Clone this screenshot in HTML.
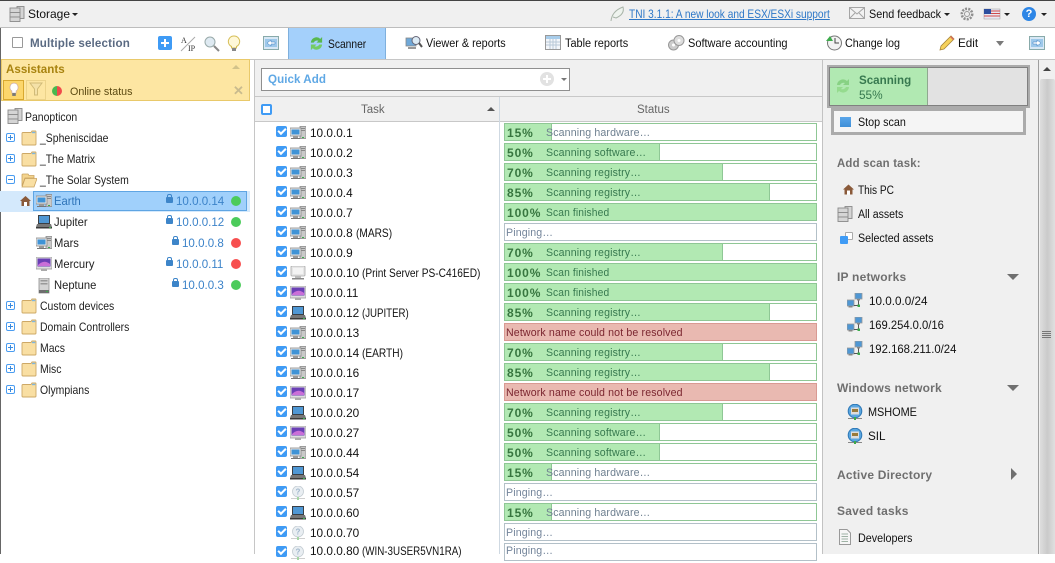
<!DOCTYPE html>
<html><head><meta charset="utf-8"><style>
html,body{margin:0;padding:0}
body{width:1055px;height:554px;overflow:hidden;position:relative;background:#fff;font:12px/14px "Liberation Sans",sans-serif;color:#111}
.a,.t,svg.i{position:absolute}
.t{white-space:nowrap;transform-origin:0 0}
svg.i{overflow:visible}
.h{font-weight:bold;color:#6f6f6f;font-size:12px;letter-spacing:.2px}
#rows{position:absolute;left:255px;top:123px;width:565px}
.r{position:relative;height:20px}
.c{position:absolute;left:21px;top:3px;width:11px;height:11px;background:#3f9bf5;border-radius:2px}
.c:after{content:"";position:absolute;left:2px;top:2px;width:6px;height:3px;border-left:2px solid #fff;border-bottom:2px solid #fff;transform:rotate(-45deg)}
.r svg{position:absolute;left:35px;top:3px;width:16px;height:16px}
.n{position:absolute;left:55px;top:3px;white-space:nowrap;font-size:11.8px;line-height:14px}
.n u{display:inline-block;text-decoration:none;transform:scaleX(.86);transform-origin:0 0}
.b{position:absolute;left:249px;top:0;width:311px;height:16px;border:1px solid #b3c0c8;background:#fff;overflow:hidden}
.f{position:absolute;left:0;top:0;height:16px;background:#b2e9b3;border-right:1px solid #8fc795}
.b.g{border-color:#8fc795}
.b.e{background:#e9b9b1;border-color:#d99a93}
.b b{position:absolute;left:2px;top:2px;color:#37763f;font-size:12px;letter-spacing:.9px;line-height:14px}
.b span{position:absolute;left:41px;top:2px;white-space:nowrap;color:#37794f;font-size:11.4px;line-height:14px;letter-spacing:.15px;transform:scaleX(.93);transform-origin:0 0}
.b.w span{color:#6d7f8f}
.b.p span{left:1px;color:#73849a}
.b.e span{left:1px;color:#7b2630}
.b span.fin{transform:scaleX(.9)}
.tr{position:absolute;left:0;width:250px;height:21px}
.pl{position:absolute;left:6px;top:5px;width:7px;height:7px;border:1px solid #4a9cf0;border-radius:2px;background:#fff}
.pl:before{content:"";position:absolute;left:1px;top:3px;width:5px;height:1px;background:#3a8be0}
.pl.o:after{content:"";position:absolute;left:3px;top:1px;width:1px;height:5px;background:#3a8be0}
.lb{position:absolute;white-space:nowrap;top:3px;font-size:11.8px;line-height:14px;color:#222;transform:scaleX(.885);transform-origin:0 0}
.lb.k{transform:scaleX(.95)}
.ip{position:absolute;white-space:nowrap;top:3px;color:#3c83c9;font-size:11.8px;line-height:14px;transform:scaleX(.98);transform-origin:0 0}
.dot{position:absolute;left:231px;top:5px;width:10px;height:10px;border-radius:50%}
.lk{position:absolute;top:6px;width:7px;height:6px;background:#3d85c9;border-radius:1px}
.lk:before{content:"";position:absolute;left:1px;top:-3px;width:3px;height:3px;border:1px solid #3d85c9;border-bottom:0;border-radius:2px 2px 0 0}
</style></head><body>
<svg width="0" height="0" style="position:absolute"><defs>
<symbol id="d" viewBox="0 0 16 16"><rect x="10" y="0.500" width="6" height="12" fill="#c9c9c9" stroke="#8a8a8a" stroke-width=".8"/><rect x="11" y="2" width="4" height="1" fill="#888"/><rect x="11" y="4" width="4" height="1" fill="#888"/><rect x="0" y="2" width="11" height="8" fill="#e5e5e5" stroke="#8a8a8a" stroke-width=".8"/><rect x="1.500" y="3.500" width="8" height="5" fill="#3f93d6"/><rect x="3" y="10" width="5" height="2" fill="#999"/><rect x="1" y="12" width="9" height="1" fill="#777"/><rect x="12" y="11" width="2" height="1" fill="#3dab4b"/></symbol>
<symbol id="l" viewBox="0 0 16 16"><rect x="2" y="0" width="12" height="9" fill="#3a3f45"/><rect x="3" y="1" width="10" height="7" fill="#4f97d4"/><path d="M1 9H15L16 12H0Z" fill="#777"/><rect x="0" y="12" width="16" height="1.500" fill="#3b3b3b"/><rect x="13" y="12" width="2" height="1" fill="#3dab4b"/></symbol>
<symbol id="m" viewBox="0 0 16 16"><rect x="0" y="0" width="16" height="12" fill="#dedede" stroke="#999" stroke-width=".8"/><rect x="1.500" y="1.500" width="13" height="8" fill="#6a3fb5"/><path d="M2 8Q8 2 14 7V9H2Z" fill="#c96fd8"/><rect x="5" y="12" width="6" height="2" fill="#aaa"/></symbol>
<symbol id="s" viewBox="0 0 16 16"><rect x="3" y="0" width="10" height="15" fill="#d4d4d4" stroke="#8f8f8f" stroke-width=".8"/><rect x="4.500" y="2" width="7" height="1.500" fill="#999"/><rect x="4.500" y="5" width="7" height="1.500" fill="#999"/><rect x="3" y="12" width="10" height="3" fill="#6e6e6e"/><rect x="10" y="13" width="2" height="1" fill="#3dab4b"/></symbol>
<symbol id="p" viewBox="0 0 16 16"><rect x="1" y="0" width="14" height="10" rx="1" fill="#e6e6e6" stroke="#aaa" stroke-width=".8"/><rect x="3" y="2" width="10" height="6" fill="#f4f4f4"/><rect x="5" y="10" width="6" height="2" fill="#bbb"/><rect x="2" y="12" width="12" height="1.500" fill="#8a8a8a"/></symbol>
<symbol id="u" viewBox="0 0 16 16"><circle cx="8" cy="5.500" r="5.500" fill="#e9eef2" stroke="#c3ccd2" stroke-width=".8"/><text x="8" y="8.500" font-size="8" font-weight="bold" text-anchor="middle" fill="#9fb6cc" font-family="Liberation Sans">?</text><rect x="1" y="12" width="14" height="1" fill="#cfcfcf"/><rect x="7" y="11" width="2" height="3" fill="#a5d6a5"/></symbol>
<symbol id="fo" viewBox="0 0 16 16"><path d="M1 3.500Q1 2.500 2 2.500H10L11 1H14.500Q15 1 15 2V14Q15 15 14 15H2Q1 15 1 14Z" fill="#f9dfa3" stroke="#cda866" stroke-width=".9"/><rect x="11" y="1.800" width="3.300" height="1.400" fill="#7fb6df"/></symbol>
<symbol id="fop" viewBox="0 0 16 16"><path d="M1 3Q1 2 2 2H7L8 3.500H13V6H4L1 14Z" fill="#f4d48e" stroke="#c9a25f" stroke-width=".8"/><path d="M4 6.500H16L13 15H1Z" fill="#f9dfa3" stroke="#c9a25f" stroke-width=".8"/></symbol>
<symbol id="st" viewBox="0 0 16 16"><g fill="#d5d5d5" stroke="#8a8a8a" stroke-width=".9"><rect x="8" y="0.500" width="7" height="12"/><rect x="1" y="2" width="10" height="4.500"/><rect x="1" y="6.500" width="10" height="4.500"/><rect x="1" y="11" width="10" height="4.500"/></g></symbol>
<symbol id="scan" viewBox="0 0 16 16"><path d="M2 7A6 6 0 0 1 12 3L14 1V7H8L10 5A4 4 0 0 0 5 7Z" fill="#58b84e"/><path d="M14 9A6 6 0 0 1 4 13L2 15V9H8L6 11A4 4 0 0 0 11 9Z" fill="#74cc64"/></symbol>
<symbol id="net" viewBox="0 0 16 16"><rect x="8" y="0" width="7" height="6" fill="#4f97d4" stroke="#999" stroke-width=".8"/><rect x="10" y="6" width="3" height="1.500" fill="#888"/><rect x="0" y="7" width="7" height="6" fill="#4f97d4" stroke="#999" stroke-width=".8"/><rect x="1.500" y="13" width="4" height="1.500" fill="#888"/><path d="M11.500 7.500V12.500H7" fill="none" stroke="#555"/><rect x="10.500" y="11.500" width="2.500" height="2.500" fill="#3dab4b"/></symbol>
<symbol id="win" viewBox="0 0 16 16"><circle cx="8" cy="7" r="6.800" fill="#5aa6e0" stroke="#2b76b5"/><rect x="4" y="3.500" width="8" height="7" fill="#ddd"/><rect x="5" y="5" width="6" height="3" fill="#9a7a3a"/><rect x="1" y="14" width="14" height="1" fill="#888"/><rect x="7" y="13" width="2" height="3" fill="#3dab4b"/></symbol>
</defs></svg>

<!-- top bar -->
<div class="a" style="left:0;top:0;width:1055px;height:27px;background:#f0f0f0;border-top:1px solid #444;box-sizing:border-box"></div>
<div class="a" style="left:0;top:27px;width:1055px;height:1px;background:#bdbdbd"></div>
<svg class="i" style="left:9px;top:6px" width="16" height="16"><use href="#st"/></svg>
<div class="t" style="left:28px;top:7px">Storage</div>
<div class="a" style="left:72px;top:13px;border:3px solid transparent;border-top:3px solid #222"></div>
<svg class="i" style="left:610px;top:6px" width="16" height="16" viewBox="0 0 16 16"><path d="M1 15Q2 5 13 1Q15 8 6 12L3 11" fill="#eef3ee" stroke="#a8b4a8"/></svg>
<div class="t" style="left:629px;top:7px;color:#2d77c7;text-decoration:underline;font-size:11.8px;transform:scaleX(.86)">TNI 3.1.1: A new look and ESX/ESXi support</div>
<svg class="i" style="left:849px;top:7px" width="16" height="13" viewBox="0 0 16 13"><rect x=".5" y=".5" width="15" height="11" fill="#f2f2f2" stroke="#a5a5a5"/><path d="M1 1L8 7L15 1M1 11L6 6M15 11L10 6" fill="none" stroke="#a5a5a5"/></svg>
<div class="t" style="left:869px;top:7px;transform:scaleX(.9)">Send feedback</div>
<div class="a" style="left:944px;top:13px;border:3px solid transparent;border-top:3px solid #222"></div>
<svg class="i" style="left:960px;top:7px" width="14" height="14" viewBox="0 0 14 14"><circle cx="7" cy="7" r="5.200" fill="none" stroke="#8f8f8f" stroke-width="2.600" stroke-dasharray="2 1.200"/><circle cx="7" cy="7" r="2.500" fill="#eee" stroke="#999"/></svg>
<svg class="i" style="left:984px;top:9px" width="16" height="10" viewBox="0 0 16 10"><rect width="16" height="10" fill="#e8e8f2" stroke="#999" stroke-width=".5"/><path d="M0 2H16M0 4.500H16M0 7H16" stroke="#cf4a4a" stroke-width="1"/><rect width="7" height="5" fill="#2c4e9e"/></svg>
<div class="a" style="left:1004px;top:13px;border:3px solid transparent;border-top:3px solid #222"></div>
<div class="a" style="left:1022px;top:7px;width:14px;height:14px;border-radius:50%;background:#2d86e6;color:#fff;font:bold 11px/14px 'Liberation Sans';text-align:center">?</div>
<div class="a" style="left:1041px;top:13px;border:3px solid transparent;border-top:3px solid #222"></div>

<!-- toolbar -->
<div class="a" style="left:0;top:59px;width:1055px;height:1px;background:#c6c6c6"></div>
<div class="a" style="left:12px;top:37px;width:9px;height:9px;border:1px solid #999;background:#fff;border-radius:1px"></div>
<div class="t" style="left:30px;top:37px;font-weight:bold;color:#5a6a82;font-size:11.6px;letter-spacing:.15px">Multiple selection</div>
<div class="a" style="left:158px;top:36px;width:14px;height:14px;background:#3f9bf5;border-radius:2px"></div>
<div class="a" style="left:161px;top:42px;width:8px;height:2px;background:#fff"></div>
<div class="a" style="left:164px;top:39px;width:2px;height:8px;background:#fff"></div>
<svg class="i" style="left:180px;top:35px" width="18" height="17" viewBox="0 0 18 17"><path d="M1 16L15 2" stroke="#aaa"/><text x="1" y="8" font-family="Liberation Serif" font-size="8" fill="#333">A</text><text x="8" y="16" font-family="Liberation Serif" font-size="8" fill="#333">IP</text></svg>
<svg class="i" style="left:204px;top:36px" width="16" height="16" viewBox="0 0 16 16"><circle cx="6" cy="6" r="5" fill="#dfeaf2" stroke="#9aa"/><path d="M10 10L15 15" stroke="#888" stroke-width="2"/></svg>
<svg class="i" style="left:227px;top:35px" width="14" height="17" viewBox="0 0 14 17"><path d="M7 1A5.500 5.500 0 0 0 4.500 11.500V13H9.500V11.500A5.500 5.500 0 0 0 7 1Z" fill="#fff8d8" stroke="#d5bd55"/><rect x="5" y="13" width="4" height="3" fill="#888"/></svg>
<svg class="i" style="left:263px;top:36px" width="16" height="14" viewBox="0 0 16 14"><rect x=".5" y=".5" width="15" height="13" fill="#d8e8f5" stroke="#8aa"/><rect x="2" y="3" width="12" height="8" fill="#9dc8ea"/><path d="M4 7L8 4V6H12V8H8V10Z" fill="#fff" stroke="#3a7cc0" stroke-width=".5"/></svg>
<div class="a" style="left:288px;top:28px;width:96px;height:31px;background:#a4d0fb;border:1px solid #7fb0dd;border-top:0;border-bottom:0"></div>
<svg class="i" style="left:309px;top:36px" width="15" height="15"><use href="#scan"/></svg>
<div class="t" style="left:328px;top:37px;font-size:11.8px;transform:scaleX(.87)">Scanner</div>
<svg class="i" style="left:406px;top:35px" width="16" height="16" viewBox="0 0 16 16"><rect x="0" y="3" width="10" height="8" fill="#6fa8d8" stroke="#888" stroke-width=".8"/><circle cx="10" cy="5.500" r="4" fill="#dcebf5" stroke="#667"/><path d="M13 8L16 12" stroke="#555" stroke-width="2"/><rect x="2" y="12" width="8" height="2" fill="#999"/></svg>
<div class="t" style="left:426px;top:37px;font-size:11.5px;transform:scaleX(.94)">Viewer &amp; reports</div>
<svg class="i" style="left:545px;top:35px" width="16" height="15" viewBox="0 0 16 15"><rect x=".5" y=".5" width="15" height="14" fill="#f3f6fa" stroke="#999"/><rect x="1" y="1" width="14" height="3" fill="#a8cdeb"/><path d="M1 7H15M1 10H15M5 4V14M8 4V14M11 4V14" stroke="#b8c8d8"/></svg>
<div class="t" style="left:565px;top:37px;font-size:11.5px;transform:scaleX(.95)">Table reports</div>
<svg class="i" style="left:668px;top:35px" width="16" height="16" viewBox="0 0 16 16"><circle cx="5.500" cy="10" r="5" fill="#ccc" stroke="#999"/><circle cx="5.500" cy="10" r="1.500" fill="#fff"/><circle cx="11" cy="5.500" r="5" fill="#ddd" stroke="#999"/><circle cx="11" cy="5.500" r="1.500" fill="#fff"/></svg>
<div class="t" style="left:688px;top:37px;font-size:11.7px;transform:scaleX(.94)">Software accounting</div>
<svg class="i" style="left:826px;top:35px" width="16" height="16" viewBox="0 0 16 16"><circle cx="8.500" cy="8" r="7" fill="#f2f2f2" stroke="#777"/><path d="M9 3V8H13" fill="none" stroke="#444"/><path d="M0 6L4 1L7 6Z" fill="#3dab4b"/></svg>
<div class="t" style="left:845px;top:37px;font-size:11.7px;transform:scaleX(.92)">Change log</div>
<svg class="i" style="left:939px;top:35px" width="16" height="16" viewBox="0 0 16 16"><path d="M1 15L2 11L12 1L15 4L5 14Z" fill="#f6d25c" stroke="#a8853a" stroke-width=".8"/><path d="M12 1L15 4L14 5L11 2Z" fill="#d86a5a"/></svg>
<div class="t" style="left:958px;top:37px;font-size:11.7px">Edit</div>
<div class="a" style="left:996px;top:41px;border:4px solid transparent;border-top:5px solid #7a7a7a;border-left-width:4px"></div>
<svg class="i" style="left:1029px;top:36px" width="16" height="14" viewBox="0 0 16 14"><rect x=".5" y=".5" width="15" height="13" fill="#d8e8f5" stroke="#8aa"/><rect x="2" y="3" width="12" height="8" fill="#9dc8ea"/><path d="M12 7L8 4V6H4V8H8V10Z" fill="#fff" stroke="#3a7cc0" stroke-width=".5"/></svg>

<!-- left -->
<div class="a" style="left:0;top:28px;width:1px;height:526px;background:#666"></div>
<div class="a" style="left:1px;top:59px;width:249px;height:42px;background:#fde6a2;border:1px solid #e9c96a;box-sizing:border-box"></div>
<div class="t" style="left:6px;top:63px;font-weight:bold;color:#a8830f;font-size:11.6px;letter-spacing:0">Assistants</div>
<div class="a" style="left:232px;top:65px;border:4px solid transparent;border-bottom:4px solid #d2c28a;border-top:0"></div>
<div class="a" style="left:3px;top:80px;width:19px;height:18px;background:#fcd66b;border:1px solid #d8a830"></div>
<svg class="i" style="left:9px;top:82px" width="10" height="15" viewBox="0 0 14 20"><path d="M7 1A6 6 0 0 0 4 12V15H10V12A6 6 0 0 0 7 1Z" fill="#fff" stroke="#caa"/><rect x="4.500" y="15" width="5" height="4" fill="#777"/></svg>
<div class="a" style="left:26px;top:80px;width:18px;height:18px;border:1px solid #ecd38a"></div>
<svg class="i" style="left:29px;top:82px" width="14" height="15" viewBox="0 0 14 15"><path d="M1 1H13L8.500 7V13H5.500V7Z" fill="#f4e1a8" stroke="#d1bb78"/></svg>
<div class="a" style="left:52px;top:86px;width:5px;height:10px;background:#48b94f;border-radius:5px 0 0 5px"></div>
<div class="a" style="left:57px;top:86px;width:5px;height:10px;background:#f04b4b;border-radius:0 5px 5px 0"></div>
<div class="t" style="left:70px;top:85px;color:#5c4a12;font-size:11.4px;transform:scaleX(.94)">Online status</div>
<div class="t" style="left:233px;top:84px;color:#c9bb8e;font-weight:bold;font-size:13px">✕</div>

<svg class="i" style="left:7px;top:108px" width="16" height="16"><use href="#st"/></svg>
<div class="t" style="left:25px;top:110px;font-size:11.8px;color:#222;transform:scaleX(.885)">Panopticon</div>

<div class="tr" style="top:128px"><i class="pl o"></i><svg class="i" style="left:21px;top:2px" width="16" height="16"><use href="#fo"/></svg><span class="lb" style="left:40px">_Spheniscidae</span></div>
<div class="tr" style="top:149px"><i class="pl o"></i><svg class="i" style="left:21px;top:2px" width="16" height="16"><use href="#fo"/></svg><span class="lb" style="left:40px">_The Matrix</span></div>
<div class="tr" style="top:170px"><i class="pl"></i><svg class="i" style="left:21px;top:2px" width="16" height="16"><use href="#fop"/></svg><span class="lb" style="left:40px">_The Solar System</span></div>
<div class="tr" style="top:191px;background:#d4e9fc"><div class="a" style="left:33px;top:0;width:212px;height:18px;background:#a0d0fb;border:1px solid #5fa5e3"></div>
<svg class="i" style="left:20px;top:5px" width="11" height="10" viewBox="0 0 11 10"><path d="M5.500 0L11 5H9.500V10H1.500V5H0Z" fill="#8a5a3a"/><rect x="4" y="6" width="3" height="4" fill="#fff"/></svg>
<svg class="i" style="left:36px;top:3px" width="16" height="16"><use href="#d"/></svg><span class="lb k" style="left:54px;color:#2d73b8">Earth</span><i class="lk" style="left:166px"></i><span class="ip" style="left:176px">10.0.0.14</span><i class="dot" style="background:#4ccb5b"></i></div>
<div class="tr" style="top:212px"><svg class="i" style="left:36px;top:3px" width="16" height="16"><use href="#l"/></svg><span class="lb k" style="left:54px">Jupiter</span><i class="lk" style="left:166px"></i><span class="ip" style="left:176px">10.0.0.12</span><i class="dot" style="background:#4ccb5b"></i></div>
<div class="tr" style="top:233px"><svg class="i" style="left:36px;top:3px" width="16" height="16"><use href="#d"/></svg><span class="lb k" style="left:54px">Mars</span><i class="lk" style="left:172px"></i><span class="ip" style="left:182px">10.0.0.8</span><i class="dot" style="background:#f74f4f"></i></div>
<div class="tr" style="top:254px"><svg class="i" style="left:36px;top:3px" width="16" height="16"><use href="#m"/></svg><span class="lb k" style="left:54px">Mercury</span><i class="lk" style="left:166px"></i><span class="ip" style="left:176px">10.0.0.11</span><i class="dot" style="background:#f74f4f"></i></div>
<div class="tr" style="top:275px"><svg class="i" style="left:36px;top:3px" width="16" height="16"><use href="#s"/></svg><span class="lb k" style="left:54px">Neptune</span><i class="lk" style="left:172px"></i><span class="ip" style="left:182px">10.0.0.3</span><i class="dot" style="background:#4ccb5b"></i></div>
<div class="tr" style="top:296px"><i class="pl o"></i><svg class="i" style="left:21px;top:2px" width="16" height="16"><use href="#fo"/></svg><span class="lb" style="left:40px">Custom devices</span></div>
<div class="tr" style="top:317px"><i class="pl o"></i><svg class="i" style="left:21px;top:2px" width="16" height="16"><use href="#fo"/></svg><span class="lb" style="left:40px">Domain Controllers</span></div>
<div class="tr" style="top:338px"><i class="pl o"></i><svg class="i" style="left:21px;top:2px" width="16" height="16"><use href="#fo"/></svg><span class="lb" style="left:40px">Macs</span></div>
<div class="tr" style="top:359px"><i class="pl o"></i><svg class="i" style="left:21px;top:2px" width="16" height="16"><use href="#fo"/></svg><span class="lb" style="left:40px">Misc</span></div>
<div class="tr" style="top:380px"><i class="pl o"></i><svg class="i" style="left:21px;top:2px" width="16" height="16"><use href="#fo"/></svg><span class="lb" style="left:40px">Olympians</span></div>

<!-- center -->
<div class="a" style="left:254px;top:60px;width:1px;height:494px;background:#c6c6c6"></div>
<div class="a" style="left:255px;top:60px;width:567px;height:61px;background:#f0f0f0"></div>
<div class="a" style="left:255px;top:96px;width:567px;height:1px;background:#c8c8c8"></div>
<div class="a" style="left:255px;top:121px;width:567px;height:1px;background:#c8c8c8"></div>
<div class="a" style="left:499px;top:97px;width:1px;height:457px;background:#cfd9e2"></div>
<div class="a" style="left:261px;top:68px;width:307px;height:21px;background:#fff;border:1px solid #8f8f8f"></div>
<div class="t" style="left:268px;top:73px;font-weight:bold;color:#5fa8e5;font-size:11.6px;letter-spacing:.05px">Quick Add</div>
<div class="a" style="left:540px;top:72px;width:14px;height:14px;border-radius:50%;background:#e2e2e2"></div>
<div class="a" style="left:543px;top:78px;width:8px;height:2px;background:#fff"></div>
<div class="a" style="left:546px;top:75px;width:2px;height:8px;background:#fff"></div>
<div class="a" style="left:561px;top:78px;border:3px solid transparent;border-top:3px solid #777"></div>
<div class="a" style="left:261px;top:104px;width:7px;height:7px;border:2px solid #3f9bf5;border-radius:2px;background:#fff"></div>
<div class="t" style="left:361px;top:103px;color:#666;font-size:11.5px">Task</div>
<div class="a" style="left:487px;top:107px;border:4px solid transparent;border-bottom:4px solid #555;border-top:0"></div>
<div class="t" style="left:637px;top:103px;color:#666;font-size:11.5px">Status</div>

<div id="rows">
<div class="r"><i class="c"></i><svg><use href="#d"/></svg><span class="n">10.0.0.1</span><div class="b g w"><div class="f" style="width:46px"></div><b>15%</b><span>Scanning hardware…</span></div></div>
<div class="r"><i class="c"></i><svg><use href="#d"/></svg><span class="n">10.0.0.2</span><div class="b g"><div class="f" style="width:154px"></div><b>50%</b><span>Scanning software…</span></div></div>
<div class="r"><i class="c"></i><svg><use href="#d"/></svg><span class="n">10.0.0.3</span><div class="b g"><div class="f" style="width:217px"></div><b>70%</b><span>Scanning registry…</span></div></div>
<div class="r"><i class="c"></i><svg><use href="#d"/></svg><span class="n">10.0.0.4</span><div class="b g"><div class="f" style="width:264px"></div><b>85%</b><span>Scanning registry…</span></div></div>
<div class="r"><i class="c"></i><svg><use href="#d"/></svg><span class="n">10.0.0.7</span><div class="b g"><div class="f" style="width:311px;border:0"></div><b>100%</b><span class="fin">Scan finished</span></div></div>
<div class="r"><i class="c"></i><svg><use href="#d"/></svg><span class="n">10.0.0.8 <u>(MARS)</u></span><div class="b p"><span>Pinging…</span></div></div>
<div class="r"><i class="c"></i><svg><use href="#d"/></svg><span class="n">10.0.0.9</span><div class="b g"><div class="f" style="width:217px"></div><b>70%</b><span>Scanning registry…</span></div></div>
<div class="r"><i class="c"></i><svg><use href="#p"/></svg><span class="n">10.0.0.10 <u>(Print Server PS-C416ED)</u></span><div class="b g"><div class="f" style="width:311px;border:0"></div><b>100%</b><span class="fin">Scan finished</span></div></div>
<div class="r"><i class="c"></i><svg><use href="#m"/></svg><span class="n">10.0.0.11</span><div class="b g"><div class="f" style="width:311px;border:0"></div><b>100%</b><span class="fin">Scan finished</span></div></div>
<div class="r"><i class="c"></i><svg><use href="#l"/></svg><span class="n">10.0.0.12 <u style="transform:scaleX(.82)">(JUPITER)</u></span><div class="b g"><div class="f" style="width:264px"></div><b>85%</b><span>Scanning registry…</span></div></div>
<div class="r"><i class="c"></i><svg><use href="#d"/></svg><span class="n">10.0.0.13</span><div class="b e"><span>Network name could not be resolved</span></div></div>
<div class="r"><i class="c"></i><svg><use href="#d"/></svg><span class="n">10.0.0.14 <u>(EARTH)</u></span><div class="b g"><div class="f" style="width:217px"></div><b>70%</b><span>Scanning registry…</span></div></div>
<div class="r"><i class="c"></i><svg><use href="#d"/></svg><span class="n">10.0.0.16</span><div class="b g"><div class="f" style="width:264px"></div><b>85%</b><span>Scanning registry…</span></div></div>
<div class="r"><i class="c"></i><svg><use href="#m"/></svg><span class="n">10.0.0.17</span><div class="b e"><span>Network name could not be resolved</span></div></div>
<div class="r"><i class="c"></i><svg><use href="#l"/></svg><span class="n">10.0.0.20</span><div class="b g"><div class="f" style="width:217px"></div><b>70%</b><span>Scanning registry…</span></div></div>
<div class="r"><i class="c"></i><svg><use href="#m"/></svg><span class="n">10.0.0.27</span><div class="b g"><div class="f" style="width:154px"></div><b>50%</b><span>Scanning software…</span></div></div>
<div class="r"><i class="c"></i><svg><use href="#d"/></svg><span class="n">10.0.0.44</span><div class="b g"><div class="f" style="width:154px"></div><b>50%</b><span>Scanning software…</span></div></div>
<div class="r"><i class="c"></i><svg><use href="#l"/></svg><span class="n">10.0.0.54</span><div class="b g w"><div class="f" style="width:46px"></div><b>15%</b><span>Scanning hardware…</span></div></div>
<div class="r"><i class="c"></i><svg><use href="#u"/></svg><span class="n">10.0.0.57</span><div class="b p"><span>Pinging…</span></div></div>
<div class="r"><i class="c"></i><svg><use href="#l"/></svg><span class="n">10.0.0.60</span><div class="b g w"><div class="f" style="width:46px"></div><b>15%</b><span>Scanning hardware…</span></div></div>
<div class="r"><i class="c"></i><svg><use href="#u"/></svg><span class="n">10.0.0.70</span><div class="b p"><span>Pinging…</span></div></div>
<div class="r"><i class="c"></i><svg><use href="#u"/></svg><span class="n" style="top:1px">10.0.0.80 <u style="transform:scaleX(.83)">(WIN-3USER5VN1RA)</u></span><div class="b p"><span style="top:0">Pinging…</span></div></div>
</div>

<!-- right -->
<div class="a" style="left:822px;top:60px;width:216px;height:494px;background:#f0f0f0;border-left:1px solid #c2c2c2;box-sizing:border-box"></div>
<div class="a" style="left:1038px;top:60px;width:17px;height:494px;background:#f0f0f0;border-left:1px solid #9e9e9e;box-sizing:border-box"></div>
<div class="a" style="left:1040px;top:79px;width:15px;height:475px;background:linear-gradient(90deg,#dedede,#cacaca 50%,#e0e0e0);border-radius:2px 2px 0 0"></div>
<div class="a" style="left:1043px;top:67px;border:4px solid transparent;border-bottom:4px solid #444;border-top:0"></div>
<div class="a" style="left:1042px;top:331px;width:9px;height:1px;background:#777;box-shadow:0 2px #777,0 4px #777,0 6px #777"></div>
<div class="a" style="left:827px;top:65px;width:203px;height:43px;background:#e2e2e2;border:2px solid #ababab;box-sizing:border-box"></div>
<div class="a" style="left:829px;top:67px;width:199px;height:39px;border:1px solid #808080;box-sizing:border-box"></div>
<div class="a" style="left:830px;top:68px;width:98px;height:37px;background:#b1e9b2;border-right:1px solid #90a890;box-sizing:border-box"></div>
<svg class="i" style="left:835px;top:78px;opacity:.45" width="16" height="16"><use href="#scan"/></svg>
<div class="t" style="left:859px;top:74px;font-weight:bold;color:#37794f;font-size:11.6px">Scanning</div>
<div class="t" style="left:859px;top:88px;color:#37794f;font-size:11.8px">55%</div>
<div class="a" style="left:831px;top:108px;width:195px;height:27px;background:#f5f5f5;border:3px solid #ababab;box-sizing:border-box"></div>
<div class="a" style="left:840px;top:117px;width:11px;height:10px;background:linear-gradient(#5aa6ea,#3f8fd7)"></div>
<div class="t" style="left:858px;top:116px;font-size:11.7px;transform:scaleX(.92)">Stop scan</div>

<div class="t h" style="left:837px;top:156px;transform:scaleX(.95)">Add scan task:</div>
<svg class="i" style="left:843px;top:184px" width="11" height="11" viewBox="0 0 11 10"><path d="M5.500 0L11 5H9.500V10H1.500V5H0Z" fill="#8a5a3a"/><rect x="4" y="6" width="3" height="4" fill="#fff"/></svg>
<div class="t" style="left:858px;top:184px;font-size:11.5px;transform:scaleX(.88)">This PC</div>
<svg class="i" style="left:837px;top:206px" width="16" height="16"><use href="#st"/></svg>
<div class="t" style="left:858px;top:208px;font-size:11.5px;transform:scaleX(.92)">All assets</div>
<div class="a" style="left:845px;top:232px;width:6px;height:6px;border:1px solid #aaa;border-radius:1px;background:#fff"></div>
<div class="a" style="left:840px;top:236px;width:8px;height:8px;background:#3f9bf5;border-radius:1px"></div>
<div class="t" style="left:858px;top:232px;font-size:11.5px;transform:scaleX(.93)">Selected assets</div>

<div class="t h" style="left:837px;top:270px">IP networks</div>
<div class="a" style="left:1007px;top:274px;border:6px solid transparent;border-top:6px solid #6f6f6f;border-bottom:0"></div>
<svg class="i" style="left:847px;top:293px" width="16" height="16"><use href="#net"/></svg>
<div class="t" style="left:869px;top:295px;font-size:11.7px">10.0.0.0/24</div>
<svg class="i" style="left:847px;top:317px" width="16" height="16"><use href="#net"/></svg>
<div class="t" style="left:869px;top:319px;font-size:11.7px;transform:scaleX(.96)">169.254.0.0/16</div>
<svg class="i" style="left:847px;top:341px" width="16" height="16"><use href="#net"/></svg>
<div class="t" style="left:869px;top:343px;font-size:11.7px;transform:scaleX(.97)">192.168.211.0/24</div>

<div class="t h" style="left:837px;top:381px">Windows network</div>
<div class="a" style="left:1007px;top:385px;border:6px solid transparent;border-top:6px solid #6f6f6f;border-bottom:0"></div>
<svg class="i" style="left:847px;top:404px" width="16" height="16"><use href="#win"/></svg>
<div class="t" style="left:868px;top:406px;font-size:11.7px;transform:scaleX(.93)">MSHOME</div>
<svg class="i" style="left:847px;top:428px" width="16" height="16"><use href="#win"/></svg>
<div class="t" style="left:868px;top:430px;font-size:11.7px">SIL</div>

<div class="t h" style="left:837px;top:468px">Active Directory</div>
<div class="a" style="left:1011px;top:468px;border:6px solid transparent;border-left:6px solid #6f6f6f;border-right:0"></div>
<div class="t h" style="left:837px;top:504px">Saved tasks</div>
<svg class="i" style="left:839px;top:529px" width="12" height="16" viewBox="0 0 12 16"><path d="M.5.500H8L11.500 4V15.500H.5Z" fill="#f6f6f6" stroke="#999"/><path d="M2.500 5H9M2.500 7.500H9M2.500 10H9M2.500 12.500H9" stroke="#9fb3a5"/></svg>
<div class="t" style="left:858px;top:532px;font-size:11.7px;transform:scaleX(.92)">Developers</div>
</body></html>
